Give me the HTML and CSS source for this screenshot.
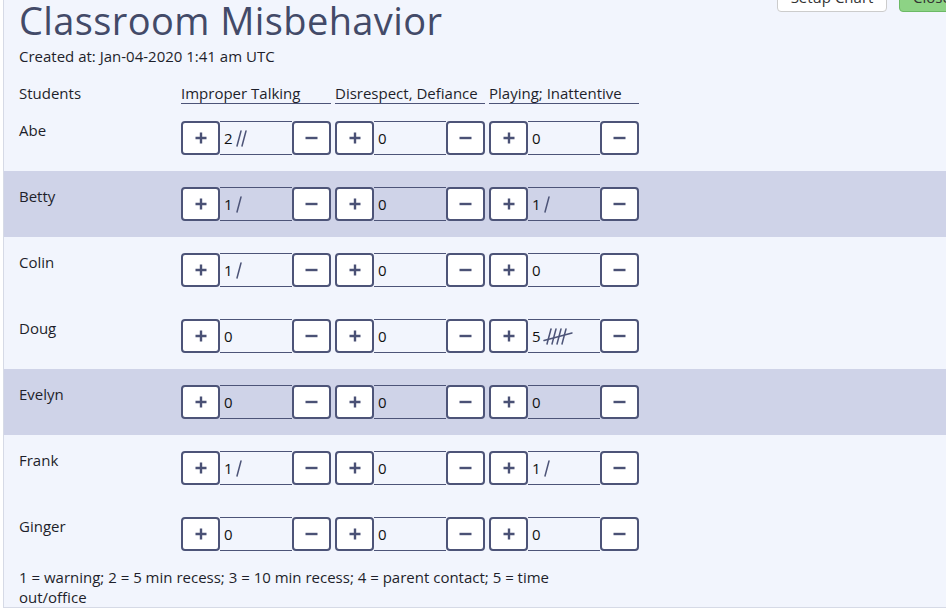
FILE: index.html
```html
<!DOCTYPE html>
<html>
<head>
<meta charset="utf-8">
<link rel="stylesheet" href="styles.css">
</head>
<body>
<div class="page">
  <div class="header">
    <h1 class="title">Classroom Misbehavior</h1>
    <div class="actions">
      <button class="action">Setup Chart</button>
      <button class="action go">Close</button>
    </div>
  </div>
  <p class="created">Created at: Jan-04-2020 1:41 am UTC</p>

  <div class="head-row">
    <div class="name">Students</div>
    <div class="cols">
      <div class="col-head">Improper Talking</div>
      <div class="col-head">Disrespect, Defiance</div>
      <div class="col-head">Playing; Inattentive</div>
    </div>
  </div>

  <div id="rows"></div>

  <p class="legend">1 = warning; 2 = 5 min recess; 3 = 10 min recess; 4 = parent contact; 5 = time out/office</p>
</div>
<script src="app.js"></script>
</body>
</html>
```

FILE: app.js
```js
const students = [
  ["Abe", [2, 0, 0], false],
  ["Betty", [1, 0, 1], true],
  ["Colin", [1, 0, 0], false],
  ["Doug", [0, 0, 5], false],
  ["Evelyn", [0, 0, 0], true],
  ["Frank", [1, 0, 1], false],
  ["Ginger", [0, 0, 0], false]
];

const plus = '<svg width="12" height="12" viewBox="0 0 12 12"><path d="M6 0.5V11.5M0.5 6H11.5" stroke="currentColor" stroke-width="2.4" fill="none"/></svg>';
const minus = '<svg width="13" height="12" viewBox="0 0 13 12"><path d="M0.5 6H12.5" stroke="currentColor" stroke-width="2.4" fill="none"/></svg>';

function tally(n) {
  if (n === 0) return '';
  if (n === 5) {
    return '<svg class="tally" width="30" height="18" viewBox="0 0 30 18">' +
      [3, 8, 13, 18].map(x => `<path d="M${x + 5} 2L${x + 1} 17"/>`).join('') +
      '<path d="M1 13.5L29 6"/></svg>';
  }
  let s = '';
  for (let i = 0; i < n; i++) {
    const x = 1 + i * 5;
    s += `<path d="M${x + 5} 2L${x + 1} 17"/>`;
  }
  return `<svg class="tally" width="${6 + n * 5}" height="18" viewBox="0 0 ${6 + n * 5} 18">${s}</svg>`;
}

const rows = document.getElementById('rows');
rows.innerHTML = students.map(([name, vals, hl]) => `
  <div class="row${hl ? ' hl' : ''}">
    <div class="name">${name}</div>
    <div class="cols">
      ${vals.map(v => `
        <div class="counter">
          <button class="btn">${plus}</button>
          <div class="value"><span>${v}</span>${tally(v)}</div>
          <button class="btn">${minus}</button>
        </div>`).join('')}
    </div>
  </div>`).join('');
```

FILE: styles.css
```css
html, body {
  margin: 0;
  padding: 0;
  overflow: hidden;
  background: #ffffff;
}

body {
  font-family: "Open Sans", "Liberation Sans", sans-serif;
  font-size: 15px;
  color: #1e1f2b;
}

.page {
  box-sizing: border-box;
  width: 1002px;
  margin: -18px 0 0 3px;
  background: #f2f5fd;
  border-left: 1px solid #d6dae6;
  border-bottom: 1px solid #d6dae6;
}

.header {
  display: flex;
  align-items: flex-start;
  padding: 0 15px 0 15px;
}

.title {
  margin: 12px 0 0 0;
  font-size: 38px;
  font-weight: 400;
  letter-spacing: 0.4px;
  line-height: normal;
  color: #434a68;
}

.actions {
  margin-left: auto;
  display: flex;
  gap: 12px;
}

.action {
  box-sizing: border-box;
  height: 30px;
  width: 110px;
  padding: 0 10px;
  font: inherit;
  font-size: 15px;
  line-height: 20px;
  color: #333;
  background: #fff;
  border: 1px solid #cccccc;
  border-radius: 4px;
}

.action.go {
  width: 91px;
  text-align: left;
  padding-left: 13px;
  background: #8dd385;
  border-color: #6cb965;
}

.created {
  margin: 0;
  padding-left: 15px;
  line-height: 20px;
}

.head-row {
  display: flex;
  margin-top: 18px;
  padding-left: 15px;
  line-height: 19px;
}

.name {
  width: 162px;
  flex: none;
  line-height: 18px;
}

.head-row .name {
  line-height: 19px;
}

.cols {
  display: flex;
  gap: 4px;
}

.col-head {
  width: 150px;
  border-bottom: 1px solid #4d5478;
  white-space: nowrap;
}

.row {
  display: flex;
  padding: 16px 0 16px 15px;
  margin-top: 1px;
}

.row + .row {
  margin-top: 0;
}

.row.hl {
  background: #cfd3e8;
}

.counter {
  display: flex;
  width: 150px;
  height: 34px;
}

.btn {
  box-sizing: border-box;
  width: 39px;
  height: 34px;
  flex: none;
  padding: 0;
  display: flex;
  align-items: center;
  justify-content: center;
  background: #ffffff;
  border: 2px solid #4d5478;
  border-radius: 4px;
  color: #4a5175;
}

.value {
  flex: 1;
  box-sizing: border-box;
  display: flex;
  align-items: center;
  gap: 2px;
  padding-left: 4px;
  border-top: 1px solid #4d5478;
  border-bottom: 1px solid #4d5478;
  color: #111;
}

.tally {
  stroke: #4d5478;
  stroke-width: 1.5;
  fill: none;
  stroke-linecap: round;
}

.legend {
  margin: 0;
  padding-left: 15px;
  max-width: 560px;
  line-height: 20px;
}
```
